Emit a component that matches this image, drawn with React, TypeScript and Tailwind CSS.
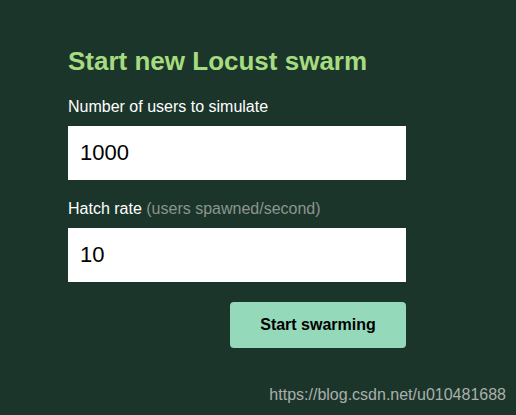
import React, { useState } from 'react';

// Locust "start swarm" form
export default function App() {
  const [users, setUsers] = useState('1000');
  const [rate, setRate] = useState('10');

  return (
    <div
      className="relative w-[516px] h-[415px] bg-[#1c352b] overflow-hidden"
      style={{ fontFamily: '"Liberation Sans", Arial, sans-serif' }}
    >
      <form
        className="flex flex-col w-[338px] ml-[68px] pt-[45px]"
        onSubmit={(e) => e.preventDefault()}
      >
        <h2 className="text-[26px] leading-[32px] font-bold text-[#a6db80]">
          Start new Locust swarm
        </h2>

        <label className="mt-[21px] text-[16px] leading-[18px] text-white">
          Number of users to simulate
        </label>
        <input
          value={users}
          onChange={(e) => setUsers(e.target.value)}
          className="mt-[10px] h-[54px] w-full bg-white px-[12px] text-[22px] text-black outline-none"
        />

        <label className="mt-[20px] text-[16px] leading-[18px] text-white">
          Hatch rate <span className="text-[#8a968f]">(users spawned/second)</span>
        </label>
        <input
          value={rate}
          onChange={(e) => setRate(e.target.value)}
          className="mt-[10px] h-[54px] w-full bg-white px-[12px] text-[22px] text-black outline-none"
        />

        <div className="flex justify-end mt-[20px]">
          <button
            type="submit"
            className="w-[176px] h-[46px] rounded-[4px] bg-[#95d9bb] text-[16px] font-bold text-black"
          >
            Start swarming
          </button>
        </div>
      </form>

      <div className="absolute right-[10px] bottom-[8px] text-[16px] text-[#a9b0ac]">
        https://blog.csdn.net/u010481688
      </div>
    </div>
  );
}
